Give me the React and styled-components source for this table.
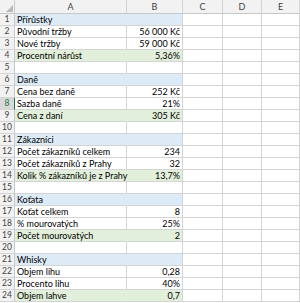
import React from 'react';
import styled, { createGlobalStyle } from 'styled-components';

const GlobalStyle = createGlobalStyle`
    html, body {
        margin: 0;
        padding: 0;
        background: #fff;
    }
    body {
        font-family: Lato, "Liberation Sans", sans-serif;
    }
`;

const Sheet = styled.div`
    display: grid;
    grid-template-columns: 15px 112px 56px 40px 39px 1fr;
    grid-auto-rows: 12px;
    grid-template-rows: 14px;
    width: 300px;
    height: 303px;
    overflow: hidden;
    font-size: 9px;
    line-height: 11px;
    color: #000;
`;

const Corner = styled.div`
    background: #f2f2f2;
    border-right: 1px solid #c8c8c8;
    border-bottom: 1px solid #c8c8c8;
    box-sizing: border-box;
    display: flex;
    align-items: flex-end;
    justify-content: flex-end;
    padding: 0 1px 1px 0;

    span {
        width: 0;
        height: 0;
        border-left: 7px solid transparent;
        border-bottom: 7px solid #b9b9b9;
    }
`;

const ColHead = styled.div`
    background: #f2f2f2;
    border-right: 1px solid #d4d4d4;
    border-bottom: 1px solid #c8c8c8;
    box-sizing: border-box;
    display: flex;
    align-items: center;
    justify-content: center;
    color: #444;
    font-size: 9px;
`;

const RowHead = styled.div`
    background: ${p => (p.$active ? '#d9d9d9' : '#f2f2f2')};
    color: ${p => (p.$active ? '#217346' : '#444')};
    border-right: 1px solid ${p => (p.$active ? '#217346' : '#c8c8c8')};
    border-bottom: 1px solid #d4d4d4;
    box-sizing: border-box;
    text-align: center;
    font-size: 8.5px;
`;

const fills = {
    blue: '#ddebf7',
    green: '#e2efda',
};

const Cell = styled.div`
    background: ${p => fills[p.$fill] || '#fff'};
    border-right: 1px solid ${p => (p.$fill && !p.$right ? 'transparent' : '#d4d4d4')};
    border-bottom: 1px solid #d4d4d4;
    box-sizing: border-box;
    padding: 0 2px;
    white-space: nowrap;
    overflow: visible;
    text-align: ${p => (p.$right ? 'right' : 'left')};
    position: relative;
    z-index: ${p => (p.$right ? 0 : 1)};
`;

const rows = [
    ['Přírůstky', '', 'blue'],
    ['Původní tržby', '56 000 Kč'],
    ['Nové tržby', '59 000 Kč'],
    ['Procentní nárůst', '5,36%', 'green'],
    ['', ''],
    ['Daně', '', 'blue'],
    ['Cena bez daně', '252 Kč'],
    ['Sazba daně', '21%'],
    ['Cena z daní', '305 Kč', 'green'],
    ['', ''],
    ['Zákazníci', '', 'blue'],
    ['Počet zákazníků celkem', '234'],
    ['Počet zákazníků z Prahy', '32'],
    ['Kolik % zákazníků je z Prahy', '13,7%', 'green'],
    ['', ''],
    ['Koťata', '', 'blue'],
    ['Koťat celkem', '8'],
    ['% mourovatých', '25%'],
    ['Počet mourovatých', '2', 'green'],
    ['', ''],
    ['Whisky', '', 'blue'],
    ['Objem lihu', '0,28'],
    ['Procento lihu', '40%'],
    ['Objem lahve', '0,7', 'green'],
];

const columns = ['A', 'B', 'C', 'D', 'E'];

export default function App() {
    return (
        <>
            <GlobalStyle />
            <Sheet>
                <Corner><span /></Corner>
                {columns.map(c => <ColHead key={c}>{c}</ColHead>)}
                {rows.map(([label, value, fill], i) => (
                    <React.Fragment key={i}>
                        <RowHead $active={i === 7}>{i + 1}</RowHead>
                        <Cell $fill={fill}>{label}</Cell>
                        <Cell $fill={fill} $right>{value}</Cell>
                        <Cell />
                        <Cell />
                        <Cell />
                    </React.Fragment>
                ))}
            </Sheet>
        </>
    );
}
